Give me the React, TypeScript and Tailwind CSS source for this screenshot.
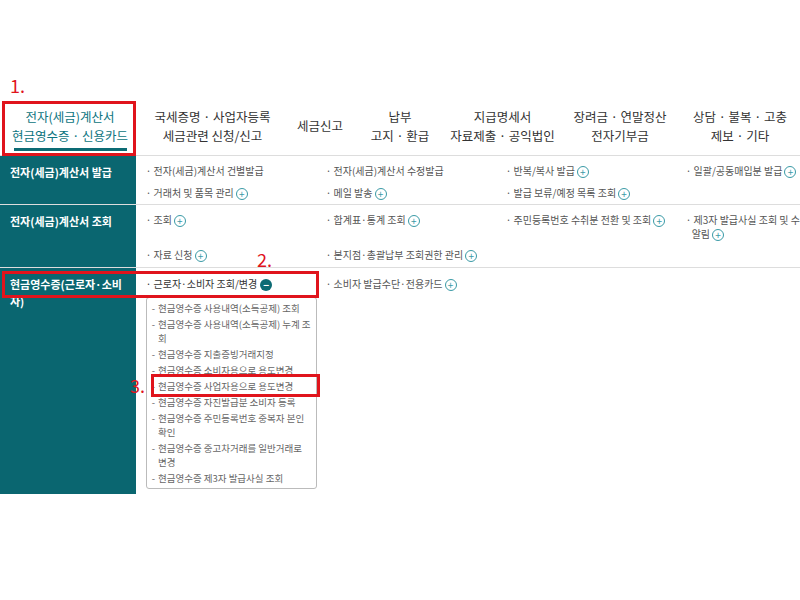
import React from "react";

const Plus = () => (
  <span className="inline-flex items-center justify-center w-[12px] h-[12px] rounded-full border border-[#3a9aa6] text-[#3a9aa6] text-[10px] leading-none ml-[2px] align-middle">+</span>
);
const Minus = () => (
  <span className="inline-flex items-center justify-center w-[12px] h-[12px] rounded-full bg-[#0c6b74] text-white text-[10px] font-bold leading-none ml-[3px] align-middle">−</span>
);

const Item = ({ t, plus = true }: { t: string; plus?: boolean }) => (
  <div className="text-[10px] text-[#555] leading-[14px]">· {t}{plus && <Plus />}</div>
);

const tabs = [
  ["국세증명 · 사업자등록", "세금관련 신청/신고", "w-[145px]"],
  ["세금신고", "", "w-[70px]"],
  ["납부", "고지 · 환급", "w-[90px]"],
  ["지급명세서", "자료제출 · 공익법인", "w-[115px]"],
  ["장려금 · 연말정산", "전자기부금", "w-[120px]"],
  ["상담 · 불복 · 고충", "제보 · 기타", "w-[120px]"],
];

const sub = [
  "현금영수증 사용내역(소득공제) 조회",
  "현금영수증 사용내역(소득공제) 누계 조회",
  "현금영수증 지출증빙거래지정",
  "현금영수증 소비자용으로 용도변경",
  "현금영수증 사업자용으로 용도변경",
  "현금영수증 자진발급분 소비자 등록",
  "현금영수증 주민등록번호 중복자 본인확인",
  "현금영수증 중고차거래를 일반거래로 변경",
  "현금영수증 제3자 발급사실 조회",
];

export default function App() {
  return (
    <div className="relative w-[800px] h-[600px] bg-white overflow-hidden" style={{ fontFamily: '"Noto Sans CJK KR", "Noto Sans", sans-serif' }}>
      <div className="pt-[100px]">
        <div className="flex h-[56px] border-b border-[#ddd] text-[12.5px] text-[#333] leading-[19px]">
          <div className="w-[140px] flex flex-col items-center justify-center text-[#0c7480] pt-[2px]">
            <div>전자(세금)계산서</div>
            <div>현금영수증 · 신용카드</div>
            <div className="w-[113px] h-[3px] bg-[#0c6b74] mt-[3px]" />
          </div>
          {tabs.map(([a, b, w]) => (
            <div key={a} className={`${w} flex flex-col items-center justify-center pb-[4px]`}>
              <div>{a}</div>
              {b && <div>{b}</div>}
            </div>
          ))}
        </div>
        <div className="flex">
          <div className="w-[141px] bg-[#0a6670] text-white text-[11px] font-bold">
            <div className="h-[49px] border-b border-[#ddd] pl-[10px] pt-[8px]">전자(세금)계산서 발급</div>
            <div className="h-[63px] border-b border-[#ddd] pl-[10px] pt-[8px]">전자(세금)계산서 조회</div>
            <div className="h-[226px] pl-[10px] pt-[8px]">현금영수증(근로자·소비자)</div>
          </div>
          <div className="flex-1">
            <div className="h-[49px] border-b border-[#ddd] grid grid-cols-[180px_180px_180px_1fr] pl-[10px] pt-[8px] gap-y-[4px]">
              <Item t="전자(세금)계산서 건별발급" plus={false} />
              <Item t="전자(세금)계산서 수정발급" plus={false} />
              <Item t="반복/복사 발급" />
              <div className="whitespace-nowrap"><Item t="일괄/공동매입분 발급" /></div>
              <Item t="거래처 및 품목 관리" />
              <Item t="메일 발송" />
              <Item t="발급 보류/예정 목록 조회" />
            </div>
            <div className="h-[63px] border-b border-[#ddd] grid grid-cols-[180px_180px_180px_1fr] pl-[10px] pt-[8px]">
              <Item t="조회" />
              <Item t="합계표·통계 조회" />
              <Item t="주민등록번호 수취분 전환 및 조회" />
              <div className="text-[10px] text-[#555] leading-[14px] whitespace-nowrap">· 제3자 발급사실 조회 및 수<br /><span className="pl-[6px]">알림</span><Plus /></div>
              <div className="mt-[2px]"><Item t="자료 신청" /></div>
              <div className="mt-[2px]"><Item t="본지점·총괄납부 조회권한 관리" /></div>
            </div>
            <div className="flex pl-[10px] pt-[9px]">
              <div className="w-[180px]">
                <div className="text-[10px] text-[#333] leading-[14px]">· 근로자·소비자 조회/변경<Minus /></div>
                <div className="mt-[6px] w-[171px] border border-[#bbb] rounded-[3px] px-[5px] py-[3px] text-[9.5px] text-[#666] leading-[14px] space-y-[2px]">
                  {sub.map((s) => (
                    <div key={s} className="flex"><span className="mr-[3px]">-</span><span>{s}</span></div>
                  ))}
                </div>
              </div>
              <Item t="소비자 발급수단·전용카드" />
            </div>
          </div>
        </div>
      </div>
      <div className="absolute left-[10px] top-[72px] text-[18px] text-[#e0141c]">1.</div>
      <div className="absolute left-[2px] top-[101px] w-[134px] h-[55px] border-[3px] border-[#e0141c]" />
      <div className="absolute left-[257px] top-[246px] text-[18px] text-[#e0141c]">2.</div>
      <div className="absolute left-[2px] top-[271px] w-[317px] h-[27px] border-[3px] border-[#e0141c]" />
      <div className="absolute left-[130px] top-[372px] text-[18px] text-[#e0141c]">3.</div>
      <div className="absolute left-[151px] top-[374px] w-[169px] h-[23px] border-[3px] border-[#e0141c]" />
    </div>
  );
}
